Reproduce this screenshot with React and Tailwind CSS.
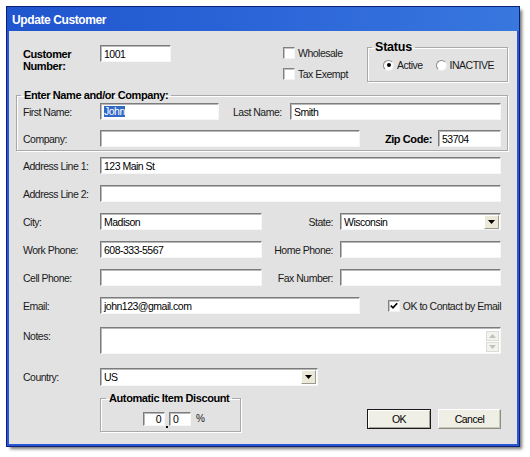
import React from 'react';

const sunk =
  'bg-white border border-t-[#7c7c7c] border-l-[#7c7c7c] border-r-[#f6f6f6] border-b-[#f6f6f6] shadow-[inset_1px_1px_0_#b8b8b8]';
const group =
  'border border-[#a9a9a9] shadow-[1px_1px_0_#ffffff,inset_1px_1px_0_#ffffff]';
const bold = 'whitespace-nowrap text-[11px] font-bold tracking-[-0.4px] text-black';

const Field = ({ className = '', children }) => (
  <div className={`flex h-[17px] items-center overflow-hidden whitespace-nowrap pl-[3px] text-black ${sunk} ${className}`}>
    {children}
  </div>
);

const Arrow = ({ color = '#000' }) => (
  <svg width="7" height="4" viewBox="0 0 7 4">
    <path d="M0 0H7L3.5 4Z" fill={color} />
  </svg>
);

const Combo = ({ className = '', value }) => (
  <div className={`flex items-center overflow-hidden ${sunk} ${className}`}>
    <span className="flex-1 whitespace-nowrap pl-[3px] text-black">{value}</span>
    <span className="mr-[1px] flex h-[14px] w-[15px] items-center justify-center border border-t-[#ffffff] border-l-[#ffffff] border-r-[#9a9a8e] border-b-[#9a9a8e] bg-[#ece9d8]">
      <Arrow />
    </span>
  </div>
);

const Check = ({ checked }) => (
  <span className="flex h-[12px] w-[12px] shrink-0 items-center justify-center border border-t-[#808080] border-l-[#808080] border-r-[#f2f2f2] border-b-[#f2f2f2] bg-white shadow-[inset_1px_1px_0_#c4c4c4]">
    {checked && (
      <svg width="8" height="8" viewBox="0 0 8 8">
        <path d="M0.8 3.6L3 5.8L7.2 1.2" stroke="#000" strokeWidth="1.7" fill="none" />
      </svg>
    )}
  </span>
);

const Radio = ({ on }) => (
  <span className="flex h-[11px] w-[11px] shrink-0 items-center justify-center rounded-full border border-t-[#8a8a8a] border-l-[#8a8a8a] border-r-[#eeeeee] border-b-[#eeeeee] bg-white">
    {on && <span className="h-[4px] w-[4px] rounded-full bg-black" />}
  </span>
);

const Label = ({ children, className = '' }) => (
  <div className={`w-[77px] shrink-0 whitespace-nowrap ${className}`}>{children}</div>
);

const Btn = ({ children, primary, className = '' }) => (
  <button
    className={`flex h-[20px] items-center justify-center bg-[#f0efe6] text-black ${
      primary
        ? 'border border-[#1a1a1a] shadow-[inset_1px_1px_0_#ffffff,inset_-1px_-1px_0_#a5a597]'
        : 'border border-t-[#ffffff] border-l-[#ffffff] border-r-[#8e8e82] border-b-[#8e8e82] shadow-[inset_-1px_-1px_0_#c9c8bb]'
    } ${className}`}
  >
    {children}
  </button>
);

export default function App() {
  return (
    <div className="h-[457px] w-[530px] bg-white pl-[7px] pt-[7px] font-['Liberation_Sans',Arial,sans-serif] text-[10.5px] leading-[14px] tracking-[-0.5px] text-[#1a1a1a]">
      <div className="flex h-[439px] w-[512px] flex-col border-2 border-t-0 border-[#2a55d6] bg-[#e2e2e2] shadow-[0_0_0_1px_#0b2178,3px_3px_3px_rgba(0,0,0,0.55)]">
        {/* title bar */}
        <div className="-mx-[2px] flex h-[24px] items-center bg-gradient-to-r from-[#1f55ce] via-[#2c65d8] to-[#3877de] pl-[5px] pt-[1px] text-[12px] font-bold tracking-[-0.4px] text-white">
          Update Customer
        </div>

        <div className="flex flex-col pl-[7px] pr-[9px]">
          {/* customer number / flags / status */}
          <div className="mt-[9px] flex h-[42px] items-start pl-[7px]">
            <Label className={`mt-[8px] leading-[12px] ${bold}`}>
              Customer
              <br />
              Number:
            </Label>
            <Field className="mt-[5px] w-[71px]">1001</Field>
            <div className="ml-[112px] mt-[7px] flex w-[84px] flex-col gap-[9px]">
              <div className="flex h-[12px] items-center gap-[3px]">
                <Check />
                <span>Wholesale</span>
              </div>
              <div className="flex h-[12px] items-center gap-[3px]">
                <Check />
                <span>Tax Exempt</span>
              </div>
            </div>
            <fieldset className={`h-[42px] w-[141px] px-[7px] ${group}`}>
              <legend className="ml-[-3px] whitespace-nowrap px-[3px] text-[12.5px] font-bold leading-[14px] tracking-[-0.2px] text-black">
                Status
              </legend>
              <div className="flex items-center pl-[8px] pt-[4px]">
                <Radio on />
                <span className="ml-[3px]">Active</span>
                <span className="ml-[13px]">
                  <Radio />
                </span>
                <span className="ml-[3px]">INACTIVE</span>
              </div>
            </fieldset>
          </div>

          {/* name group */}
          <fieldset className={`mt-[6px] px-[6px] pb-[3px] pt-[1px] ${group}`}>
            <legend className={`ml-[-2px] px-[3px] leading-[14px] ${bold}`}>Enter Name and/or Company:</legend>
            <div className="flex h-[17px] items-center">
              <Label>First Name:</Label>
              <Field className="w-[119px]">
                <span className="bg-[#3169c6] leading-[11px] text-white">John</span>
              </Field>
              <div className="ml-[14px] w-[57px] whitespace-nowrap">Last Name:</div>
              <Field className="w-[211px]">Smith</Field>
            </div>
            <div className="mt-[10px] flex h-[17px] items-center">
              <Label>Company:</Label>
              <Field className="w-[260px]" />
              <div className={`ml-auto ${bold}`}>Zip Code:</div>
              <Field className="ml-[6px] w-[63px]">53704</Field>
            </div>
          </fieldset>

          {/* address rows */}
          <div className="flex flex-col gap-[11px] px-[7px] pt-[6px]">
            <div className="flex h-[17px] items-center">
              <Label>Address Line 1:</Label>
              <Field className="flex-1">123 Main St</Field>
            </div>
            <div className="flex h-[17px] items-center">
              <Label>Address Line 2:</Label>
              <Field className="flex-1" />
            </div>
            <div className="flex h-[17px] items-center">
              <Label>City:</Label>
              <Field className="w-[162px]">Madison</Field>
              <div className="flex-1 pr-[7px] text-right">State:</div>
              <Combo className="h-[17px] w-[161px]" value="Wisconsin" />
            </div>
            <div className="flex h-[17px] items-center">
              <Label>Work Phone:</Label>
              <Field className="w-[162px]">608-333-5567</Field>
              <div className="flex-1 pr-[7px] text-right">Home Phone:</div>
              <Field className="w-[161px]" />
            </div>
            <div className="flex h-[17px] items-center">
              <Label>Cell Phone:</Label>
              <Field className="w-[162px]" />
              <div className="flex-1 pr-[7px] text-right">Fax Number:</div>
              <Field className="w-[161px]" />
            </div>
            <div className="flex h-[17px] items-center">
              <Label>Email:</Label>
              <Field className="w-[260px]">john123@gmail.com</Field>
              <div className="ml-[28px] flex items-center gap-[3px]">
                <Check checked />
                <span className="whitespace-nowrap">OK to Contact by Email</span>
              </div>
            </div>
          </div>

          {/* notes */}
          <div className="mt-[13px] flex items-start px-[7px]">
            <Label className="mt-[2px]">Notes:</Label>
            <div className={`flex h-[27px] flex-1 justify-end ${sunk}`}>
              <div className="mr-[1px] mt-[3px] flex flex-col gap-[1px]">
                <span className="flex h-[10px] w-[13px] items-center justify-center border border-[#dcdcd4] bg-[#f2f2ee]">
                  <svg width="7" height="4" viewBox="0 0 7 4">
                    <path d="M0 4H7L3.5 0Z" fill="#c2c2bc" />
                  </svg>
                </span>
                <span className="flex h-[10px] w-[13px] items-center justify-center border border-[#dcdcd4] bg-[#f2f2ee]">
                  <Arrow color="#c2c2bc" />
                </span>
              </div>
            </div>
          </div>

          {/* country */}
          <div className="mt-[14px] flex h-[18px] items-center px-[7px]">
            <Label>Country:</Label>
            <Combo className="h-[18px] w-[218px]" value="US" />
          </div>

          {/* discount + buttons */}
          <div className="mt-[5px] flex items-start px-[7px]">
            <div className="w-[77px] shrink-0" />
            <fieldset className={`w-[141px] px-[7px] pb-[5px] pt-[7px] ${group}`}>
              <legend className={`ml-[-2px] px-[3px] leading-[14px] ${bold}`}>Automatic Item Discount</legend>
              <div className="flex items-end pl-[35px]">
                <div className={`flex h-[14px] w-[22px] items-center justify-end pr-[3px] text-black ${sunk}`}>0</div>
                <span className="mx-[1px] mb-[-2px] h-[2px] w-[2px] bg-black" />
                <div className={`flex h-[14px] w-[22px] items-center pl-[3px] text-black ${sunk}`}>0</div>
                <span className="ml-[5px] self-center text-[10px]">%</span>
              </div>
            </fieldset>
            <div className="ml-auto mt-[18px] flex gap-[7px]">
              <Btn primary className="w-[64px]">OK</Btn>
              <Btn className="w-[63px]">Cancel</Btn>
            </div>
          </div>
        </div>
      </div>
    </div>
  );
}
